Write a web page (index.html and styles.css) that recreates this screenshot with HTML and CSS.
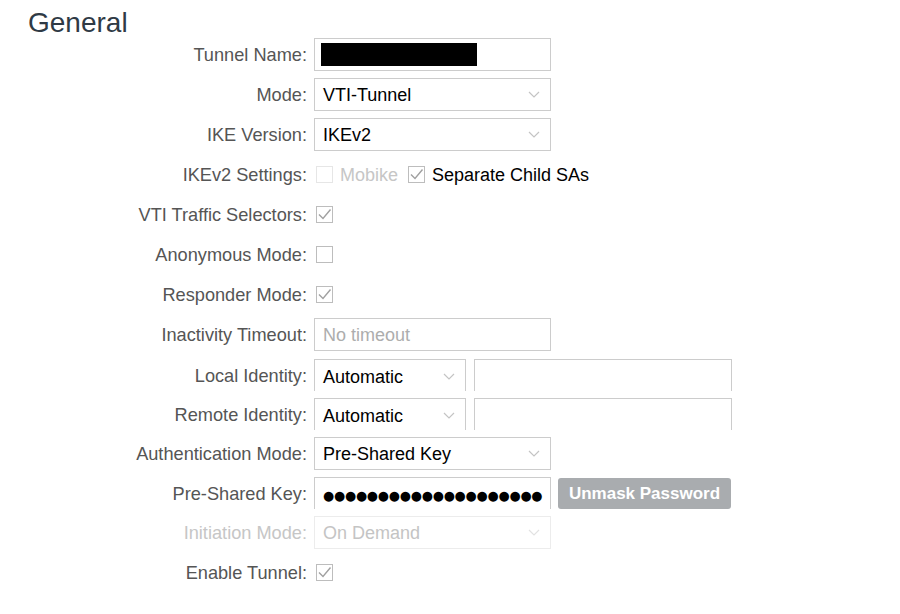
FILE: index.html
```html
<!DOCTYPE html>
<html lang="en">
<head>
<meta charset="utf-8">
<title>General</title>
<link rel="stylesheet" href="styles.css">
</head>
<body>
<h2 class="title">General</h2>
<div class="form">
  <div class="row">
    <div class="label">Tunnel Name:</div>
    <div class="controls"><div class="field wide"><span class="redact"></span></div></div>
  </div>
  <div class="row">
    <div class="label">Mode:</div>
    <div class="controls"><div class="field wide select"><span>VTI-Tunnel</span><svg class="chev" width="12" height="7" viewBox="0 0 12 7"><path d="M1 1l5 5 5-5" fill="none" stroke="#c4c4c4" stroke-width="1.2"/></svg></div></div>
  </div>
  <div class="row">
    <div class="label">IKE Version:</div>
    <div class="controls"><div class="field wide select"><span>IKEv2</span><svg class="chev" width="12" height="7" viewBox="0 0 12 7"><path d="M1 1l5 5 5-5" fill="none" stroke="#c4c4c4" stroke-width="1.2"/></svg></div></div>
  </div>
  <div class="row">
    <div class="label">IKEv2 Settings:</div>
    <div class="controls">
      <span class="check disabled"></span><span class="opt disabled-text">Mobike</span>
      <span class="check second"><svg width="15" height="15" viewBox="0 0 15 15"><path d="M2 7.5l4 4 7.5-9" fill="none" stroke="#a0a0a0" stroke-width="1.4"/></svg></span><span class="opt">Separate Child SAs</span>
    </div>
  </div>
  <div class="row">
    <div class="label">VTI Traffic Selectors:</div>
    <div class="controls"><span class="check"><svg width="15" height="15" viewBox="0 0 15 15"><path d="M2 7.5l4 4 7.5-9" fill="none" stroke="#a0a0a0" stroke-width="1.4"/></svg></span></div>
  </div>
  <div class="row">
    <div class="label">Anonymous Mode:</div>
    <div class="controls"><span class="check"></span></div>
  </div>
  <div class="row">
    <div class="label">Responder Mode:</div>
    <div class="controls"><span class="check"><svg width="15" height="15" viewBox="0 0 15 15"><path d="M2 7.5l4 4 7.5-9" fill="none" stroke="#a0a0a0" stroke-width="1.4"/></svg></span></div>
  </div>
  <div class="row">
    <div class="label">Inactivity Timeout:</div>
    <div class="controls"><div class="field wide"><span class="placeholder">No timeout</span></div></div>
  </div>
  <div class="row short first-short">
    <div class="label">Local Identity:</div>
    <div class="controls gap8">
      <div class="field narrow select open"><span>Automatic</span><svg class="chev" width="12" height="7" viewBox="0 0 12 7"><path d="M1 1l5 5 5-5" fill="none" stroke="#c4c4c4" stroke-width="1.2"/></svg></div>
      <div class="field ident open"></div>
    </div>
  </div>
  <div class="row short">
    <div class="label">Remote Identity:</div>
    <div class="controls gap8">
      <div class="field narrow select open"><span>Automatic</span><svg class="chev" width="12" height="7" viewBox="0 0 12 7"><path d="M1 1l5 5 5-5" fill="none" stroke="#c4c4c4" stroke-width="1.2"/></svg></div>
      <div class="field ident open"></div>
    </div>
  </div>
  <div class="row">
    <div class="label">Authentication Mode:</div>
    <div class="controls"><div class="field wide select"><span>Pre-Shared Key</span><svg class="chev" width="12" height="7" viewBox="0 0 12 7"><path d="M1 1l5 5 5-5" fill="none" stroke="#c4c4c4" stroke-width="1.2"/></svg></div></div>
  </div>
  <div class="row short">
    <div class="label">Pre-Shared Key:</div>
    <div class="controls gap7">
      <div class="field wide open pw"><span class="dots">●●●●●●●●●●●●●●●●●●●●</span></div>
      <button class="btn" type="button">Unmask Password</button>
    </div>
  </div>
  <div class="row">
    <div class="label disabled-text">Initiation Mode:</div>
    <div class="controls"><div class="field wide select faded"><span>On Demand</span><svg class="chev" width="12" height="7" viewBox="0 0 12 7"><path d="M1 1l5 5 5-5" fill="none" stroke="#e2e2e2" stroke-width="1.2"/></svg></div></div>
  </div>
  <div class="row">
    <div class="label">Enable Tunnel:</div>
    <div class="controls"><span class="check"><svg width="15" height="15" viewBox="0 0 15 15"><path d="M2 7.5l4 4 7.5-9" fill="none" stroke="#a0a0a0" stroke-width="1.4"/></svg></span></div>
  </div>
</div>
</body>
</html>
```
FILE: styles.css
```css
html, body {
  margin: 0;
  padding: 0;
  background: #fff;
}
body {
  font-family: "Liberation Sans", Arial, sans-serif;
  width: 900px;
  height: 614px;
  overflow: hidden;
}
.title {
  margin: 0;
  padding: 9px 0 0 28px;
  height: 29px;
  font-size: 28px;
  line-height: 27px;
  font-weight: normal;
  color: #2f3a45;
}
.form {
  display: flex;
  flex-direction: column;
  gap: 7px;
}
.row {
  display: grid;
  grid-template-columns: 307px 1fr;
  column-gap: 7px;
  height: 33px;
  align-items: center;
}
.row.short {
  height: 32px;
  align-items: start;
}
.row.first-short {
  margin-top: 1px;
}
.label {
  text-align: right;
  font-size: 18.2px;
  color: #555;
  white-space: nowrap;
  padding-top: 2px;
}
.row.short .label {
  line-height: 33px;
  padding-top: 1px;
}
.controls {
  display: flex;
  align-items: center;
  height: 100%;
}
.gap8 { gap: 8px; align-items: flex-start; }
.gap7 { gap: 7px; align-items: flex-start; }
.field {
  box-sizing: border-box;
  height: 33px;
  border: 1px solid #ccc;
  display: flex;
  align-items: center;
  padding: 2px 10px 0 8px;
  font-size: 18px;
  color: #000;
  background: #fff;
}
.field.open {
  border-bottom: none;
  height: 32px;
  padding-top: 3px;
}
.field.pw {
  padding-right: 2px;
  overflow: hidden;
}
.field.wide { width: 237px; }
.field.narrow { width: 152px; }
.field.ident { width: 258px; }
.select { justify-content: space-between; }
.chev { flex: none; margin-top: -2px; }
.field.faded {
  border-color: #ececec;
  color: #c4c4c4;
}
.redact {
  display: block;
  width: 156px;
  height: 23px;
  background: #000;
  margin: -2px 0 0 -2px;
}
.placeholder { color: #adadad; }
.dots {
  font-family: "DejaVu Sans", sans-serif;
  font-size: 12.8px;
  letter-spacing: -0.2px;
  color: #000;
  white-space: nowrap;
}
.check {
  box-sizing: border-box;
  width: 17px;
  height: 17px;
  border: 1px solid #bdbdbd;
  margin-left: 2px;
  display: flex;
  align-items: center;
  justify-content: center;
  background: #fff;
}
.check.disabled { border-color: #e6e6e6; }
.check.second { margin-left: 10px; }
.opt {
  font-size: 18px;
  color: #000;
  margin-left: 7px;
  padding-top: 2px;
}
.disabled-text { color: #c6c6c6; }
.btn {
  margin-top: 1px;
  width: 173px;
  height: 31px;
  border: none;
  border-radius: 3px;
  background: #a9acaf;
  color: #fff;
  font-family: "Liberation Sans", Arial, sans-serif;
  font-weight: bold;
  font-size: 17px;
  padding: 0;
}
```
